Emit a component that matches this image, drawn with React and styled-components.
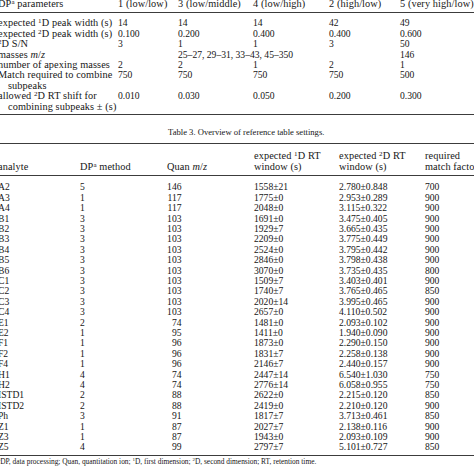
import styled, { createGlobalStyle } from "styled-components";

const GlobalStyle = createGlobalStyle`
  html, body {
    margin: 0;
    padding: 0;
    background: #fff;
  }
  body {
    font-family: "Liberation Serif", "Times New Roman", serif;
    color: #161616;
    overflow: hidden;
  }
`;

const Page = styled.div`
  width: 474px;
  height: 470px;
  overflow: hidden;
`;

const Sheet = styled.div`
  margin-left: -2px;
  margin-top: -1px;
  width: 492px;
`;

const Table = styled.table`
  border-collapse: collapse;
  table-layout: fixed;
  width: 100%;
  font-size: 9.6px;
  line-height: 10.4px;
  border-bottom: 1.5px solid #3c3c3c;
  ${(p) => (p.$ruled ? "border-top: 1.5px solid #3c3c3c;" : "")}

  tbody tr:first-child td {
    padding-top: ${(p) => p.$bodyTop}px;
  }
  tbody tr:last-child td {
    padding-bottom: 2px;
  }
`;

const HeadCell = styled.th`
  font-weight: normal;
  font-size: 10.3px;
  letter-spacing: 0.1px;
  text-align: left;
  vertical-align: bottom;
  padding: ${(p) => p.$top || 0}px 0 3px 0;
  border-bottom: 1.5px solid #3c3c3c;
  white-space: nowrap;
`;

const Cell = styled.td`
  padding: 0;
  padding-left: ${(p) => p.$indent || 0}px;
  vertical-align: top;
  text-align: left;
  white-space: nowrap;
  ${(p) => (p.$text ? "font-size: 10.3px; letter-spacing: 0.1px;" : "")}
`;

const Sup = styled.sup`
  font-size: 0.68em;
  line-height: 0;
  vertical-align: 0.5em;
`;

const Var = styled.i`
  font-style: italic;
`;

const Wrap = styled.span`
  display: block;
  padding-left: ${(p) => (p.$hang ? 10 : 0)}px;
`;

const RightNum = styled.span`
  display: inline-block;
  width: 14.5px;
  text-align: right;
`;

const Caption = styled.div`
  font-size: 8.6px;
  line-height: 10.4px;
  margin: 12px 0 6px;
  padding-left: 170px;
  white-space: nowrap;
`;

const Footnote = styled.div`
  font-size: 7.4px;
  line-height: 10.4px;
  margin-top: 1px;
  white-space: nowrap;
`;

const paramCols = [120, 60, 75, 76, 71, 90];
const refCols = [82, 87, 87, 85, 86, 65];

const params = [
  { label: <>expected <Sup>1</Sup>D peak width (s)</>, values: ["14", "14", "14", "42", "49"] },
  { label: <>expected <Sup>2</Sup>D peak width (s)</>, values: ["0.100", "0.200", "0.400", "0.400", "0.600"] },
  { label: <><Sup>2</Sup>D S/N</>, values: ["3", "1", "1", "3", "50"] },
  { label: <>masses <Var>m</Var>/<Var>z</Var></>, span: "25–27, 29–31, 33–43, 45–350", values: ["146"] },
  { label: <>number of apexing masses</>, values: ["2", "2", "1", "2", "1"] },
  {
    label: (
      <>
        <Wrap>Match required to combine</Wrap>
        <Wrap $hang>subpeaks</Wrap>
      </>
    ),
    values: ["750", "750", "750", "750", "500"],
  },
  {
    label: (
      <>
        <Wrap>allowed <Sup>2</Sup>D RT shift for</Wrap>
        <Wrap $hang>combining subpeaks ± (s)</Wrap>
      </>
    ),
    values: ["0.010", "0.030", "0.050", "0.200", "0.300"],
  },
];

const refs = [
  ["A2", "5", "146", "1558±21", "2.780±0.848", "700"],
  ["A3", "1", "117", "1775±0", "2.953±0.289", "900"],
  ["A4", "1", "117", "2048±0", "3.115±0.322", "900"],
  ["B1", "3", "103", "1691±0", "3.475±0.405", "900"],
  ["B2", "3", "103", "1929±7", "3.665±0.435", "900"],
  ["B3", "3", "103", "2209±0", "3.775±0.449", "900"],
  ["B4", "3", "103", "2524±0", "3.795±0.442", "900"],
  ["B5", "3", "103", "2846±0", "3.798±0.438", "900"],
  ["B6", "3", "103", "3070±0", "3.735±0.435", "800"],
  ["C1", "3", "103", "1509±7", "3.403±0.401", "900"],
  ["C2", "3", "103", "1740±7", "3.765±0.465", "850"],
  ["C3", "3", "103", "2020±14", "3.995±0.465", "900"],
  ["C4", "3", "103", "2657±0", "4.110±0.502", "900"],
  ["E1", "2", "74", "1481±0", "2.093±0.102", "900"],
  ["E2", "1", "95", "1411±0", "1.940±0.090", "900"],
  ["F1", "1", "96", "1873±0", "2.290±0.150", "900"],
  ["F2", "1", "96", "1831±7", "2.258±0.138", "900"],
  ["F4", "1", "96", "2146±7", "2.440±0.157", "900"],
  ["H1", "4", "74", "2447±14", "6.540±1.030", "750"],
  ["H2", "4", "74", "2776±14", "6.058±0.955", "750"],
  ["ISTD1", "2", "88", "2622±0", "2.215±0.120", "850"],
  ["ISTD2", "2", "88", "2419±0", "2.210±0.120", "900"],
  ["Ph", "3", "91", "1817±7", "3.713±0.461", "850"],
  ["Z1", "1", "87", "2027±7", "2.138±0.116", "900"],
  ["Z3", "1", "87", "1943±0", "2.093±0.109", "900"],
  ["Z5", "4", "99", "2797±7", "5.101±0.727", "850"],
];

const ParamTable = () => (
  <Table $bodyTop={5}>
    <colgroup>
      {paramCols.map((w, i) => (
        <col key={i} style={{ width: w }} />
      ))}
    </colgroup>
    <thead>
      <tr>
        <HeadCell>
          DP<Sup>a</Sup> parameters
        </HeadCell>
        <HeadCell>1 (low/low)</HeadCell>
        <HeadCell>3 (low/middle)</HeadCell>
        <HeadCell>4 (low/high)</HeadCell>
        <HeadCell>2 (high/low)</HeadCell>
        <HeadCell>5 (very high/low)</HeadCell>
      </tr>
    </thead>
    <tbody>
      {params.map((row, i) => (
        <tr key={i}>
          <Cell $text>{row.label}</Cell>
          {row.span ? (
            <Cell colSpan={4} $indent={60}>
              {row.span}
            </Cell>
          ) : null}
          {row.values.map((v, j) => (
            <Cell key={j}>{v}</Cell>
          ))}
        </tr>
      ))}
    </tbody>
  </Table>
);

const RefTable = () => (
  <Table $ruled $bodyTop={6}>
    <colgroup>
      {refCols.map((w, i) => (
        <col key={i} style={{ width: w }} />
      ))}
    </colgroup>
    <thead>
      <tr>
        <HeadCell $top={7}>analyte</HeadCell>
        <HeadCell $top={7}>
          DP<Sup>a</Sup> method
        </HeadCell>
        <HeadCell $top={7}>
          Quan <Var>m</Var>/<Var>z</Var>
        </HeadCell>
        <HeadCell $top={7}>
          <Wrap>
            expected <Sup>1</Sup>D RT
          </Wrap>
          <Wrap>window (s)</Wrap>
        </HeadCell>
        <HeadCell $top={7}>
          <Wrap>
            expected <Sup>2</Sup>D RT
          </Wrap>
          <Wrap>window (s)</Wrap>
        </HeadCell>
        <HeadCell $top={7}>
          <Wrap>required</Wrap>
          <Wrap>match factor</Wrap>
        </HeadCell>
      </tr>
    </thead>
    <tbody>
      {refs.map(([name, dp, quan, rt1, rt2, match]) => (
        <tr key={name}>
          <Cell>{name}</Cell>
          <Cell>{dp}</Cell>
          <Cell>
            <RightNum>{quan}</RightNum>
          </Cell>
          <Cell>{rt1}</Cell>
          <Cell>{rt2}</Cell>
          <Cell>{match}</Cell>
        </tr>
      ))}
    </tbody>
  </Table>
);

export default function App() {
  return (
    <Page>
      <GlobalStyle />
      <Sheet>
        <ParamTable />
        <Caption>Table 3. Overview of reference table settings.</Caption>
        <RefTable />
        <Footnote>
          <Sup>a</Sup>DP, data processing; Quan, quantitation ion; <Sup>1</Sup>D, first
          dimension; <Sup>2</Sup>D, second dimension; RT, retention time.
        </Footnote>
      </Sheet>
    </Page>
  );
}
